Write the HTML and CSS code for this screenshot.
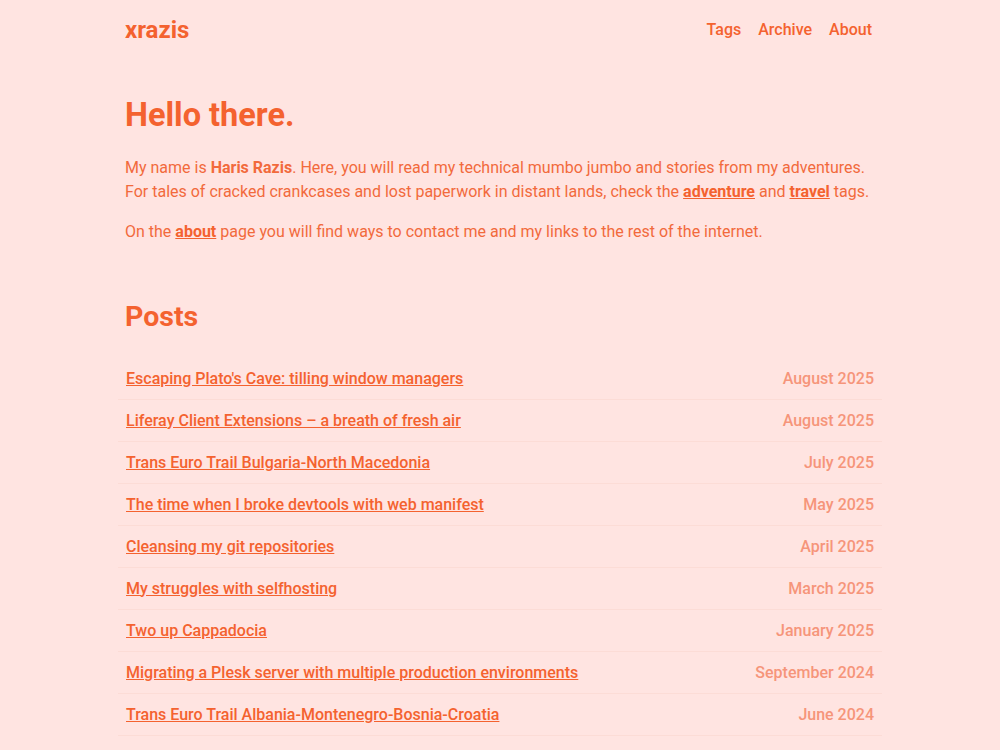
FILE: index.html
```html
<!DOCTYPE html>
<html lang="en">
<head>
<meta charset="utf-8">
<title>xrazis</title>
<link rel="stylesheet" href="styles.css">
</head>
<body>
<div class="page">
  <header class="site-header">
    <a class="logo" href="#">xrazis</a>
    <nav class="nav">
      <a href="#">Tags</a>
      <a href="#">Archive</a>
      <a href="#">About</a>
    </nav>
  </header>
  <main>
    <section class="intro">
      <h1>Hello there.</h1>
      <p>My name is <strong>Haris Razis</strong>. Here, you will read my technical mumbo jumbo and stories from my adventures. For tales of cracked crankcases and lost paperwork in distant lands, check the <a href="#">adventure</a> and <a href="#">travel</a> tags.</p>
      <p>On the <a href="#">about</a> page you will find ways to contact me and my links to the rest of the internet.</p>
    </section>
    <section class="posts">
      <h2>Posts</h2>
      <ul class="post-list">
        <li><a href="#">Escaping Plato's Cave: tilling window managers</a><span class="date">August 2025</span></li>
        <li><a href="#">Liferay Client Extensions – a breath of fresh air</a><span class="date">August 2025</span></li>
        <li><a href="#">Trans Euro Trail Bulgaria-North Macedonia</a><span class="date">July 2025</span></li>
        <li><a href="#">The time when I broke devtools with web manifest</a><span class="date">May 2025</span></li>
        <li><a href="#">Cleansing my git repositories</a><span class="date">April 2025</span></li>
        <li><a href="#">My struggles with selfhosting</a><span class="date">March 2025</span></li>
        <li><a href="#">Two up Cappadocia</a><span class="date">January 2025</span></li>
        <li><a href="#">Migrating a Plesk server with multiple production environments</a><span class="date">September 2024</span></li>
        <li><a href="#">Trans Euro Trail Albania-Montenegro-Bosnia-Croatia</a><span class="date">June 2024</span></li>
      </ul>
    </section>
  </main>
</div>
</body>
</html>
```
FILE: styles.css
```css
html, body {
  margin: 0;
  padding: 0;
}
body {
  background: #ffe4e1;
  color: #f26a3c;
  font-family: Roboto, "Liberation Sans", sans-serif;
  font-size: 16px;
  line-height: 24px;
}
a {
  color: #f4622f;
}
.page {
  width: 750px;
  margin: 0 auto;
}
.site-header {
  display: flex;
  justify-content: space-between;
  align-items: center;
  height: 60px;
}
.logo {
  font-size: 24px;
  font-weight: 700;
  text-decoration: none;
  color: #f4622f;
}
.nav {
  display: flex;
  gap: 17px;
  padding-right: 3px;
}
.nav a {
  font-weight: 500;
  text-decoration: none;
  font-size: 16px;
}
.intro h1 {
  font-size: 32.5px;
  line-height: 40px;
  font-weight: 700;
  margin: 35px 0 21px;
  color: #f4622f;
}
.intro p {
  margin: 0 0 16px;
}
.intro strong, .intro a {
  font-weight: 700;
}
.posts h2 {
  font-size: 28.5px;
  line-height: 36px;
  font-weight: 700;
  margin: 55px 0 23px;
  color: #f4622f;
}
.post-list {
  list-style: none;
  margin: 0 -7px;
  padding: 0;
}
.post-list li {
  display: flex;
  justify-content: space-between;
  align-items: center;
  height: 41px;
  padding: 0 8px;
  border-bottom: 1px solid #fcdcd6;
}
.post-list a {
  font-weight: 500;
}
.post-list .date {
  font-weight: 500;
  color: #f6957a;
}
```
